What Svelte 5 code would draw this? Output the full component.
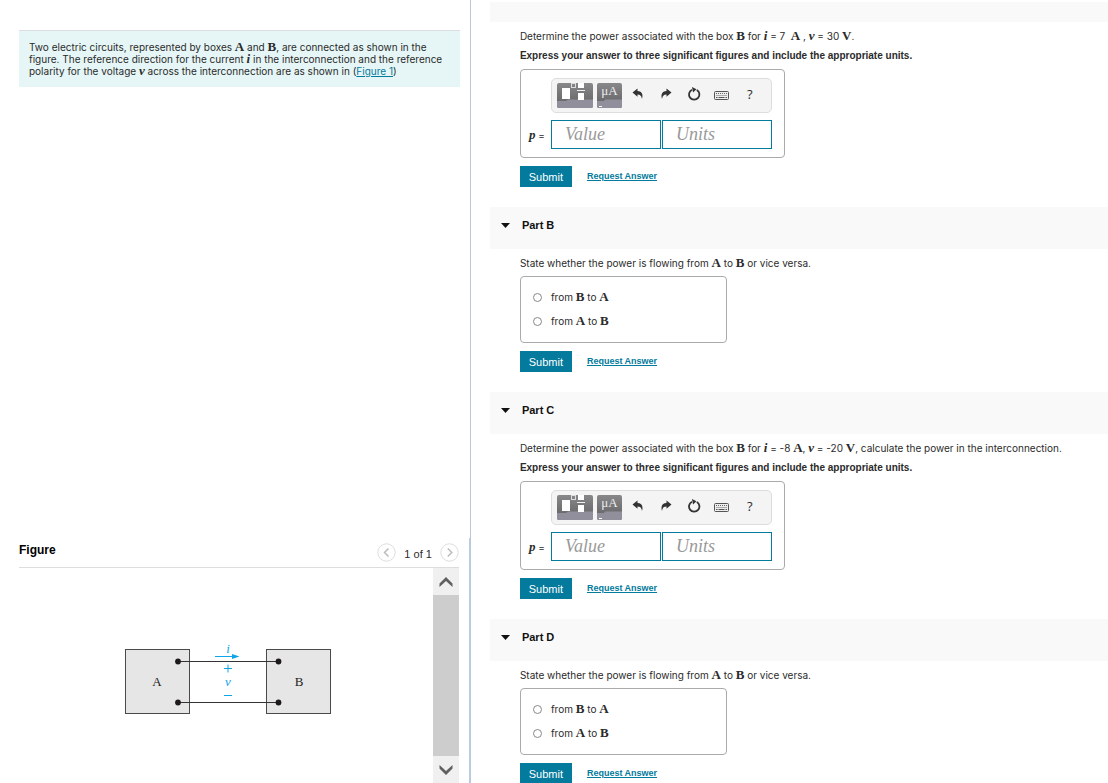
<script>
  const parts = [
    { id: 'a', title: '', kind: 'value', i: '7', v: '30', tail: '.' },
    { id: 'b', title: 'Part B', kind: 'choice' },
    { id: 'c', title: 'Part C', kind: 'value', i: '-8', v: '-20', tail: ', calculate the power in the interconnection.' },
    { id: 'd', title: 'Part D', kind: 'choice' }
  ];
  const choices = [['B', 'A'], ['A', 'B']];
</script>

<div class="page">
  <aside class="left">
    <section class="intro">
      <p>
        Two electric circuits, represented by boxes <b class="m">A</b> and <b class="m">B</b>, are connected as shown in the
        figure. The reference direction for the current <i class="m">i</i> in the interconnection and the reference
        polarity for the voltage <i class="m">v</i> across the interconnection are as shown in (<a href="#figure">Figure 1</a>)
      </p>
    </section>

    <section class="figure" id="figure">
      <header class="fig-head">
        <h2>Figure</h2>
        <nav>
          <button class="round" aria-label="Previous figure">
            <svg width="19" height="19" viewBox="0 0 19 19"><circle cx="9.5" cy="9.5" r="8.7" /><path d="M11.5 5.5 7.5 9.5l4 4" /></svg>
          </button>
          <span>1 of 1</span>
          <button class="round" aria-label="Next figure">
            <svg width="19" height="19" viewBox="0 0 19 19"><circle cx="9.5" cy="9.5" r="8.7" /><path d="M7.8 5.5l4 4-4 4" /></svg>
          </button>
        </nav>
      </header>
      <div class="fig-body">
        <div class="canvas">
          <svg width="210" height="76" viewBox="0 0 210 76" role="img" aria-label="Boxes A and B joined by two wires">
            <g fill="#e6e6e6" stroke="#4a4a4a">
              <rect x="2.5" y="9.5" width="64" height="64" />
              <rect x="143.5" y="9.5" width="64" height="64" />
            </g>
            <g stroke="#333" stroke-width="1.2">
              <path d="M55 21.5H155M55 62.5H155" />
            </g>
            <g fill="#1e1a1b">
              <circle cx="55" cy="21.5" r="2.9" /><circle cx="155.5" cy="21.5" r="2.9" />
              <circle cx="55" cy="62.5" r="2.9" /><circle cx="155.5" cy="62.5" r="2.9" />
            </g>
            <g font-family="'Liberation Serif', serif" font-size="13" text-anchor="middle" fill="#222">
              <text x="34" y="46">A</text>
              <text x="176" y="46">B</text>
              <text x="105" y="13" font-style="italic" fill="#10a5e8">i</text>
              <text x="105" y="46" font-style="italic" fill="#10a5e8">v</text>
            </g>
            <g stroke="#10a5e8" fill="none">
              <path d="M92 16.5H111M101 28.5H109M105 24.5V32.5M101 55.5H109" />
              <path d="M109 14 116.5 16.5 109 19Z" fill="#10a5e8" stroke="none" />
            </g>
          </svg>
        </div>
        <div class="bar">
          <button aria-label="Scroll up"><svg width="14" height="12" viewBox="0 0 14 12"><path d="M0.5 11V7.500L7 1l6.500 6.500V11L7 5Z" /></svg></button>
          <div class="thumb"></div>
          <button aria-label="Scroll down"><svg width="14" height="12" viewBox="0 0 14 12"><path d="M0.5 1V4.500L7 11l6.500-6.500V1L7 7Z" /></svg></button>
        </div>
      </div>
    </section>
  </aside>

  <main>
    {#each parts as p (p.id)}
      <section>
        {#if p.title}
          <header class="part">
            <svg width="9" height="5" viewBox="0 0 9 5"><path d="M0 0H9L4.5 5Z" fill="#111" /></svg>
            <h2>{p.title}</h2>
          </header>
        {:else}
          <header class="part cut"></header>
        {/if}
        <div class="body">
          {#if p.kind === 'value'}
            <p>
              Determine the power associated with the box <b class="m">B</b> for <i class="m">i</i> = {p.i}
              {#if p.id === 'a'}&nbsp;<b class="m">A</b>&nbsp;{:else}<b class="m">A</b>{/if}, <i class="m">v</i> = {p.v} <b class="m">V</b>{p.tail}
            </p>
            <p class="strong">Express your answer to three significant figures and include the appropriate units.</p>
            <div class="answer">
              <div class="tools">
                <button class="dark wide" aria-label="Templates">
                  <svg width="36" height="25" viewBox="0 0 36 25">
                    <path d="M0 18H9L11 16.500H36V25H0Z" fill="#918f9c" />
                    <rect x="5" y="5" width="8" height="11" fill="#fff" />
                    <rect x="14.5" y="0.5" width="4" height="4" fill="none" stroke="#ddd" />
                    <rect x="21" y="0" width="6" height="5" fill="#fff" />
                    <rect x="20" y="7" width="8" height="1" fill="#eee" />
                    <rect x="21" y="10" width="6" height="7" fill="#fff" />
                  </svg>
                </button>
                <button class="dark units" aria-label="Units symbols">
                  <svg width="25" height="25" viewBox="0 0 25 25">
                    <path d="M0 18H7L8 16.5H25V25H0Z" fill="#918f9c" />
                    <path d="M2 23.5H5" stroke="#fff" />
                    <text x="12.5" y="12" text-anchor="middle" font-family="'Liberation Serif', serif" font-size="13" fill="#eee">μA</text>
                  </svg>
                </button>
                <button class="tool" aria-label="Undo">
                  <svg width="12" height="12" viewBox="0 0 12 12"><path d="M0.5 4.5 5.5 0.5V3C9.5 3 11.5 6 10 11 9.5 8 8.5 6.5 5.5 6.5V8.8Z" fill="#333" /></svg>
                </button>
                <button class="tool" aria-label="Redo">
                  <svg width="12" height="12" viewBox="0 0 12 12"><path d="M11.5 4.5 6.5 0.5V3C2.5 3 0.5 6 2 11 2.5 8 3.5 6.5 6.5 6.5V8.8Z" fill="#333" /></svg>
                </button>
                <button class="tool" aria-label="Reset">
                  <svg width="14" height="14" viewBox="0 0 14 14"><path d="M9.8 3A5.2 5.2 0 1 1 5 2.8" fill="none" stroke="#333" stroke-width="1.8" /><path d="M5 0 9.5 2.2 6 5.5Z" fill="#333" /></svg>
                </button>
                <button class="tool" aria-label="Keyboard shortcuts">
                  <svg class="keys" width="15" height="9" viewBox="0 0 15 9"><rect x="0.5" y="0.5" width="14" height="8" rx="1" fill="#eee" stroke="#555" /><path d="M2 2.500H13M2.500 4.500H13" stroke="#666" stroke-dasharray="1 1" /><path d="M2 6.500H3.500M4.500 6.500H10.500M11.500 6.500H13" stroke="#555" /></svg>
                </button>
                <button class="tool help" aria-label="Help">?</button>
              </div>
              <div class="fields">
                <label for="value-{p.id}"><i class="m">p</i> =</label>
                <input id="value-{p.id}" type="text" placeholder="Value" />
                <input type="text" placeholder="Units" aria-label="Units" />
              </div>
            </div>
          {:else}
            <p>State whether the power is flowing from <b class="m">A</b> to <b class="m">B</b> or vice versa.</p>
            <div class="answer options">
              {#each choices as [from, to]}
                <label>
                  <input type="radio" name="direction-{p.id}" value={from + to} />
                  <span>from <b class="m">{from}</b> to <b class="m">{to}</b></span>
                </label>
              {/each}
            </div>
          {/if}
          <div class="actions">
            <button class="submit">Submit</button>
            <a href="#answer-{p.id}">Request Answer</a>
          </div>
        </div>
      </section>
    {/each}
  </main>
</div>

<style>
  :global(body) {
    margin: 0;
    background: #fff;
  }
  .page {
    display: grid;
    grid-template-columns: 42.5% 1fr;
    height: 100vh;
    overflow: hidden;
    font: 10px/20px Inter, 'Liberation Sans', Arial, sans-serif;
    color: #2b2b2b;
  }
  p, h2 { margin: 0; }
  h2, nav, .strong, .actions {
    font-family: 'Liberation Sans', Arial, sans-serif;
  }
  button {
    margin: 0;
    padding: 0;
    border: 0;
    background: none;
    font: inherit;
    color: inherit;
    cursor: pointer;
  }
  svg { display: block; }
  a { color: #047a9c; }
  .m {
    font-family: 'Liberation Serif', 'Times New Roman', serif;
    font-size: 13px;
    font-weight: bold;
    line-height: 1px;
  }

  .left {
    display: flex;
    flex-direction: column;
    justify-content: space-between;
    min-height: 0;
  }
  .intro {
    flex: 1;
    padding: 30px 10px 0 19px;
    border-right: 1px solid #b9c9da;
  }
  .intro p {
    padding: 10px;
    border-top: 1px solid #ddd;
    background: #e6f6f7;
    line-height: 12px;
  }
  .figure {
    padding-left: 19px;
    padding-right: 10px;
    border-right: 2px solid #b9cbe0;
  }
  .fig-head {
    display: flex;
    justify-content: space-between;
    height: 29px;
    border-bottom: 1px solid #ddd;
  }
  .fig-head h2 {
    font-size: 12px;
    line-height: 24px;
    color: #000;
  }
  .fig-head nav {
    display: flex;
    align-items: center;
    gap: 8px;
    font-size: 11px;
  }
  .fig-head span { padding-top: 2px; }
  .round circle { fill: #fff; stroke: #ddd; }
  .round path { fill: none; stroke: #bbb; stroke-width: 1.5; }
  .fig-body {
    display: flex;
    height: 215px;
  }
  .canvas {
    flex: 1;
    display: flex;
    justify-content: center;
    padding: 72px 0 0 4px;
  }
  .bar {
    display: flex;
    flex-direction: column;
    width: 26px;
    background: #f0f0f0;
  }
  .bar button {
    display: grid;
    place-items: center;
    height: 27px;
  }
  .bar path { fill: #606060; }
  .thumb {
    flex: 1;
    background: #cdcdcd;
  }

  main {
    min-width: 0;
    padding: 2px 0 0 19px;
    overflow: hidden;
  }
  .part {
    display: flex;
    align-items: center;
    gap: 12px;
    height: 42px;
    padding: 0 0 0 11px;
    box-sizing: border-box;
    background: #f9f9f9;
  }
  .part h2 {
    font-size: 11px;
    color: #111;
  }
  .part svg, .part h2 { margin-bottom: 6px; }
  .part.cut { height: 20px; }
  .body { padding: 4px 0 20px 30px; }
  .strong { font-weight: bold; }
  .answer {
    width: fit-content;
    margin-top: 3px;
    padding: 8px 12px 8px 8px;
    box-sizing: border-box;
    border: 1px solid #aaa;
    border-radius: 4px;
  }
  .tools {
    display: flex;
    width: 221px;
    height: 35px;
    margin: 0 0 7px 22px;
    padding-left: 5px;
    box-sizing: border-box;
    border: 1px solid #ddd;
    border-radius: 5px;
    background: #f4f4f4;
  }
  .dark {
    height: 25px;
    margin: 4px 4px 0 0;
    border-radius: 2px;
    overflow: hidden;
    background: linear-gradient(#88888b, #606063);
  }
  .dark.units { margin-right: 2px; }
  .tool {
    display: grid;
    place-items: center;
    width: 28px;
    height: 30px;
  }
  .keys { margin-top: 3px; }
  .help {
    font-family: 'Open Sans', sans-serif;
    font-size: 13px;
  }
  .fields {
    display: flex;
    align-items: center;
  }
  .fields label { width: 22px; white-space: nowrap; }
  .fields input {
    width: 110px;
    height: 29px;
    padding: 0 13px;
    box-sizing: border-box;
    border: 1px solid #047a9c;
    border-radius: 0;
    background: #fff;
    font: italic 18px 'Liberation Serif', serif;
  }
  .fields input + input { margin-left: 1px; }
  .fields input::placeholder { color: #999; opacity: 1; }
  .options {
    width: 207px;
    padding: 8px 12px 9px;
  }
  .options label {
    display: flex;
    align-items: center;
    gap: 9px;
    height: 24px;
  }
  .options input {
    appearance: none;
    width: 9px;
    height: 9px;
    margin: 0;
    border: 1px solid #888;
    border-radius: 50%;
    background: #fff;
    box-sizing: border-box;
  }
  .options input:checked { background: #047a9c; }
  .actions {
    display: flex;
    align-items: flex-start;
    gap: 15px;
    height: 21px;
    margin-top: 8px;
  }
  .actions a {
    font-size: 9px;
    font-weight: bold;
  }
  .submit {
    width: 52px;
    height: 21px;
    background: #047a9c;
    color: #fff;
    font-size: 11px;
  }
</style>
